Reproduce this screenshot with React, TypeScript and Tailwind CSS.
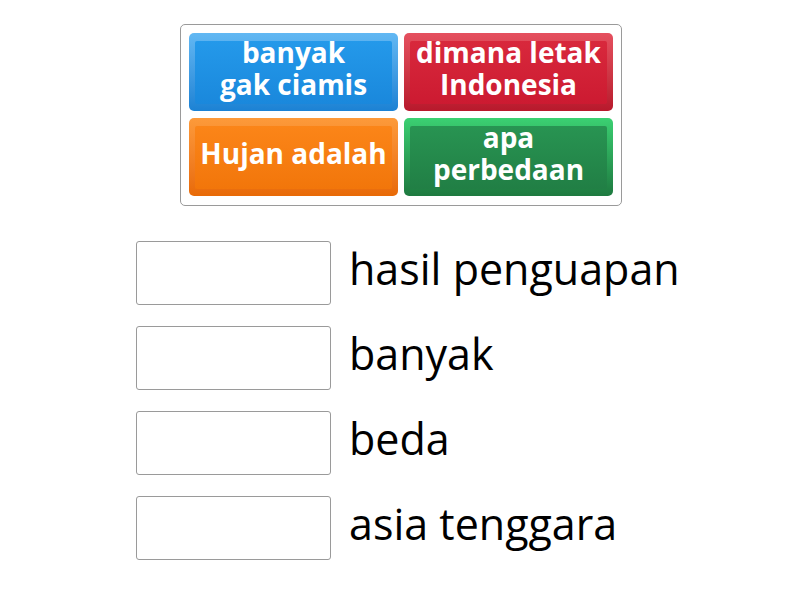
const tiles = [
  {
    label: ['banyak', 'gak ciamis'],
    outer: 'bg-gradient-to-b from-[#62b8f3] to-[#1b82d4]',
    inner: 'bg-gradient-to-b from-[#2499ea] to-[#1a88dc]',
  },
  {
    label: ['dimana letak', 'Indonesia'],
    outer: 'bg-gradient-to-b from-[#e5505f] to-[#b8182c]',
    inner: 'bg-gradient-to-b from-[#d8283c] to-[#cc1a31]',
  },
  {
    label: ['Hujan adalah'],
    outer: 'bg-gradient-to-b from-[#fd9a3a] to-[#e86a06]',
    inner: 'bg-gradient-to-b from-[#fb8518] to-[#f2760a]',
  },
  {
    label: ['apa', 'perbedaan'],
    outer: 'bg-gradient-to-b from-[#3bd072] to-[#1e7a40]',
    inner: 'bg-gradient-to-b from-[#289452] to-[#217f45]',
  },
];

const rows = ['hasil penguapan', 'banyak', 'beda', 'asia tenggara'];

export default function App() {
  return (
    <div
      className="w-[800px] h-[600px] bg-white flex flex-col"
      style={{ fontFamily: '"Open Sans", sans-serif' }}
    >
      {/* Answer tiles */}
      <div className="mt-[24px] ml-[180px] w-[442px] h-[182px] border border-[#9a9a9a] rounded-[5px] p-[8px] grid grid-cols-2 grid-rows-[78px_78px] gap-x-[6px] gap-y-[7px]">
        {tiles.map((t) => (
          <div
            key={t.label.join(' ')}
            className={`min-h-0 rounded-[5px] pt-[8px] px-[6px] pb-[7px] flex ${t.outer}`}
          >
            <div
              className={`flex-1 min-h-0 rounded-[2px] flex flex-col items-center justify-center text-white font-bold text-[28px] leading-[32px] whitespace-nowrap pb-[10px] ${t.inner}`}
            >
              {t.label.map((l) => (
                <span key={l}>{l}</span>
              ))}
            </div>
          </div>
        ))}
      </div>

      {/* Targets */}
      <div className="mt-[35px] ml-[136px] flex flex-col gap-[21px]">
        {rows.map((r) => (
          <div key={r} className="flex items-center gap-[18px]">
            <div className="w-[195px] h-[64px] border border-[#9a9a9a] rounded-[3px] bg-white" />
            <span className="text-[43px] text-black leading-none pb-[10px]">{r}</span>
          </div>
        ))}
      </div>
    </div>
  );
}
